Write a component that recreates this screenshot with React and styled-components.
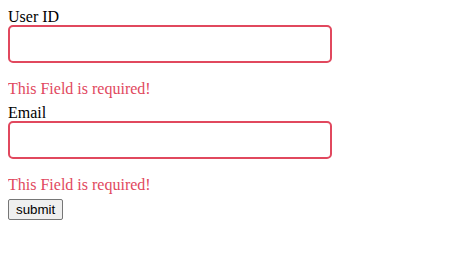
import React from "react";
import styled, { createGlobalStyle } from "styled-components";

const GlobalStyle = createGlobalStyle`
  body {
    margin: 8px;
    background: #ffffff;
    font-family: "Liberation Serif", "Times New Roman", serif;
    font-size: 16px;
    color: #000000;
  }
`;

const StyledForm = styled.form`
  display: flex;
  flex-direction: column;
  align-items: flex-start;
`;
const Label = styled.label`
  display: block;
  line-height: 17px;
  height: 17px;
`;
const StyledInput = styled.input`
  box-sizing: border-box;
  width: 324px;
  height: 38px;
  border: 2px solid #e1485e;
  border-radius: 5px;
  outline: none;
  padding: 0 8px;
  font-size: 16px;
`;
const ErrorText = styled.p`
  margin: 17px 0 ${({ $last }) => ($last ? "5px" : "6px")};
  line-height: 18px;
  color: #e1485e;
`;
const SubmitButton = styled.button`
  box-sizing: border-box;
  height: 21px;
  padding: 1px 7px;
  font-family: "Liberation Sans", Arial, sans-serif;
  font-size: 13.33px;
  color: #000;
  background: #efefef;
  border: 1px solid #767676;
  border-radius: 2px;
`;

const Field = ({ id, label, type, last }) => (
  <>
    <Label htmlFor={id}>{label}</Label>
    <StyledInput id={id} type={type} />
    <ErrorText $last={last}>This Field is required!</ErrorText>
  </>
);

const App = () => (
  <>
    <GlobalStyle />
    <StyledForm onSubmit={e => e.preventDefault()}>
      <Field id="userId" label="User ID" type="text" />
      <Field id="email" label="Email" type="email" last />
      <SubmitButton type="submit">submit</SubmitButton>
    </StyledForm>
  </>
);

export default App;
